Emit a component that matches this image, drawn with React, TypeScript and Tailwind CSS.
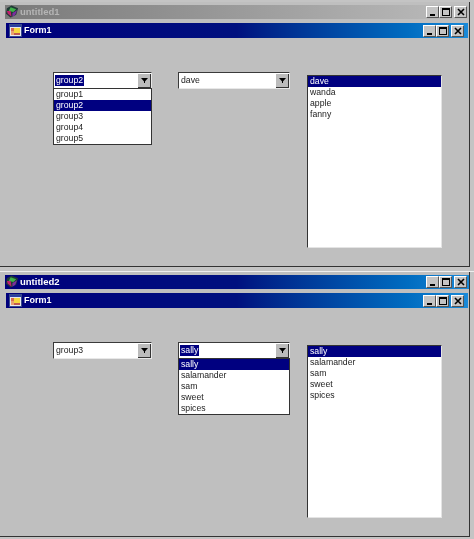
import type { ReactNode } from "react";

function WinButtons() {
  const btn =
    "flex h-[12px] w-[13px] items-center justify-center border-t border-l border-r border-b border-t-white border-l-white border-r-[#555] border-b-[#555] bg-[#c4c4c4]";
  return (
    <div className="flex items-center">
      <div className={`${btn} !items-end`}>
        <div className="mb-[1px] h-[2px] w-[5px] bg-black" />
      </div>
      <div className={btn}>
        <div className="h-[8px] w-[8px] border border-t-2 border-black" />
      </div>
      <div className={`${btn} ml-[2px]`}>
        <svg width="8" height="8" viewBox="0 0 8 8">
          <path d="M1 1 L7 7 M7 1 L1 7" stroke="#000" strokeWidth="1.6" />
        </svg>
      </div>
    </div>
  );
}

function CubeIcon() {
  return (
    <svg width="14" height="14" viewBox="0 0 15 14" className="shrink-0">
      <path d="M7 0 L14 3 L12 10 L6 13 L1 9 L2 3 Z" fill="#1f3a36" />
      <path d="M6 2 L12 4 L9 7 L4 6 Z" fill="#3fb04a" />
      <path d="M2 6 L6 6 L7 12 L3 9 Z" fill="#c0206e" />
      <path d="M8 8 L13 5 L11 10 L8 12 Z" fill="#7a2fa0" />
    </svg>
  );
}

function FormIcon() {
  return (
    <svg width="13" height="13" viewBox="0 0 13 13" className="shrink-0">
      <rect x="0.5" y="0.5" width="12" height="12" fill="#e8e8f0" stroke="#3a4a8a" />
      <rect x="1" y="1" width="11" height="2" fill="#2a3fa0" />
      <rect x="2" y="4" width="3" height="3" fill="#d86a50" />
      <rect x="5" y="4" width="6" height="5" fill="#f5d840" />
      <rect x="2" y="7" width="3" height="4" fill="#e8a070" />
      <rect x="5" y="9" width="6" height="2" fill="#c05a50" />
    </svg>
  );
}

function Row({ label, selected }: { label: string; selected: boolean }) {
  return (
    <div
      className={`h-[11px] pl-[2px] text-[8.7px] leading-[11px] ${
        selected ? "bg-[#000080] text-white" : "text-[#222]"
      }`}
    >
      {label}
    </div>
  );
}

type ComboProps = {
  value: string;
  highlighted?: boolean;
  width: string;
  items?: string[];
  selected?: string;
};

function Combo({ value, highlighted, width, items, selected }: ComboProps) {
  return (
    <div className={`relative h-[17px] shrink-0 ${width}`}>
      <div className="flex h-full items-center justify-between border-t border-l border-r border-b border-t-[#3a3a3a] border-l-[#3a3a3a] border-r-[#e8e8e8] border-b-[#e8e8e8] bg-white">
        <span
          className={`ml-[1px] px-[1px] text-[8.7px] leading-[11px] ${
            highlighted ? "bg-[#000080] text-white" : "text-[#222]"
          }`}
        >
          {value}
        </span>
        <div className="flex h-[14px] w-[13px] items-center justify-center border-r border-b border-r-[#333] border-b-[#333] bg-[#bcbcbc]">
          <svg width="7" height="5" viewBox="0 0 7 5">
            <path d="M0 0 H7 L3.5 4 Z M3 3 H4 V5 H3 Z" fill="#000" />
          </svg>
        </div>
      </div>
      {items ? (
        <div className="absolute left-0 right-0 top-[16px] z-10 border border-[#333] bg-white">
          {items.map((item) => (
            <Row key={item} label={item} selected={item === selected} />
          ))}
        </div>
      ) : null}
    </div>
  );
}

function ListBox({ items }: { items: string[] }) {
  return (
    <div className="mt-[3px] h-[173px] w-[135px] shrink-0 border-t border-l border-r border-b border-t-[#333] border-l-[#333] border-r-[#e4e4e4] border-b-[#e4e4e4] bg-white">
      {items.map((item, i) => (
        <Row key={item} label={item} selected={i === 0} />
      ))}
    </div>
  );
}

type WindowProps = {
  title: string;
  active: boolean;
  children: ReactNode;
};

function AppWindow({ title, active, children }: WindowProps) {
  return (
    <div className="h-[265px] w-[470px] border-b border-r border-b-[#333] border-r-[#333] bg-[#bfbfbf] pl-[5px] pt-[3px]">
      <div
        className={`flex h-[14px] items-center justify-between bg-gradient-to-r pr-[2px] ${
          active
            ? "from-[#00007c] via-[#00107f] to-[#1a8ad8]"
            : "from-[#7a7a7a] to-[#bcbcbc]"
        }`}
      >
        <div className="flex items-center gap-[1px]">
          <CubeIcon />
          <span
            className={`text-[9.5px] font-bold leading-none ${
              active ? "text-white" : "text-[#b5b5b5]"
            }`}
          >
            {title}
          </span>
        </div>
        <WinButtons />
      </div>
      <div className="ml-[1px] mr-[1px] mt-[4px] flex h-[15px] items-center justify-between bg-gradient-to-r from-[#00007c] via-[#00107f] to-[#1a8ad8] pl-[3px] pr-[4px]">
        <div className="flex items-center gap-[2px]">
          <FormIcon />
          <span className="text-[9px] font-bold leading-none text-white">Form1</span>
        </div>
        <WinButtons />
      </div>
      <div className="flex pl-[48px] pt-[34px]">{children}</div>
    </div>
  );
}

export default function App() {
  return (
    <div className="h-[539px] w-[474px] overflow-hidden bg-[#c4c4c4] pt-[2px] font-['Liberation_Sans',Arial,sans-serif] blur-[0.3px]">
      <AppWindow title="untitled1" active={false}>
        <Combo
          value="group2"
          highlighted
          width="w-[99px]"
          items={["group1", "group2", "group3", "group4", "group5"]}
          selected="group2"
        />
        <div className="ml-[26px]">
          <Combo value="dave" width="w-[112px]" />
        </div>
        <div className="ml-[17px]">
          <ListBox items={["dave", "wanda", "apple", "fanny"]} />
        </div>
      </AppWindow>
      <div className="h-[5px] border-b border-b-[#eeeeee]" />
      <AppWindow title="untitled2" active>
        <Combo value="group3" width="w-[99px]" />
        <div className="ml-[26px]">
          <Combo
            value="sally"
            highlighted
            width="w-[112px]"
            items={["sally", "salamander", "sam", "sweet", "spices"]}
            selected="sally"
          />
        </div>
        <div className="ml-[17px]">
          <ListBox items={["sally", "salamander", "sam", "sweet", "spices"]} />
        </div>
      </AppWindow>
    </div>
  );
}
